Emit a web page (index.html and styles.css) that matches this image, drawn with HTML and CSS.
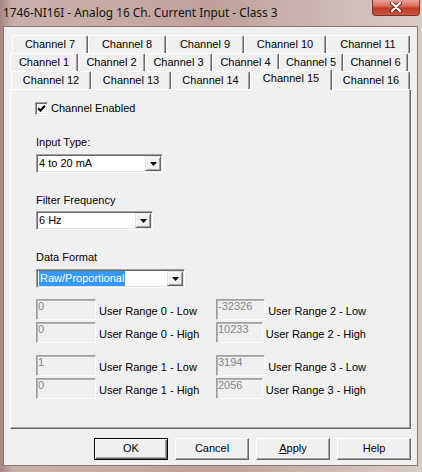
FILE: index.html
```html
<!DOCTYPE html>
<html>
<head>
<meta charset="utf-8">
<title>1746-NI16I</title>
<link rel="stylesheet" href="styles.css">
</head>
<body>
<div class="window">
  <div class="titlebar">
    <span class="title">1746-NI16I - Analog 16 Ch. Current Input - Class 3</span>
    <div class="close">
      <svg width="12" height="10" viewBox="0 0 12 10">
        <path d="M2 1 L10 9 M10 1 L2 9" stroke="#6a2a20" stroke-width="4" stroke-linecap="round"/>
        <path d="M2 1 L10 9 M10 1 L2 9" stroke="#ffffff" stroke-width="2.2" stroke-linecap="round"/>
      </svg>
    </div>
  </div>
  <div class="client">
    <div class="tabs">
      <div class="tabrow r1">
        <div class="tab w76">Channel 7</div>
        <div class="tab w78">Channel 8</div>
        <div class="tab w78">Channel 9</div>
        <div class="tab w82">Channel 10</div>
        <div class="tab w84">Channel 11</div>
      </div>
      <div class="tabrow r2">
        <div class="tab w68">Channel 1</div>
        <div class="tab w67">Channel 2</div>
        <div class="tab w67">Channel 3</div>
        <div class="tab w67">Channel 4</div>
        <div class="tab w64">Channel 5</div>
        <div class="tab w65">Channel 6</div>
      </div>
      <div class="tabrow r3">
        <div class="tab w80">Channel 12</div>
        <div class="tab w80">Channel 13</div>
        <div class="tab w79">Channel 14</div>
        <div class="tab w82 sel">Channel 15</div>
        <div class="tab w78">Channel 16</div>
      </div>
    </div>
    <div class="panel">
      <div class="checkrow">
        <span class="checkbox">
          <svg width="9" height="9" viewBox="0 0 9 9">
            <polyline points="1.2,4.2 3.4,6.6 7.8,1.8" fill="none" stroke="#000" stroke-width="2.1"/>
          </svg>
        </span>
        <span>Channel Enabled</span>
      </div>

      <div class="label l1">Input Type:</div>
      <div class="combo c1 mt5">
        <span class="val">4 to 20 mA</span>
        <span class="dropbtn"><svg width="7" height="4" viewBox="0 0 7 4"><polygon points="0,0 7,0 3.5,4" fill="#000"/></svg></span>
      </div>

      <div class="label l1">Filter Frequency</div>
      <div class="combo c2 mt4">
        <span class="val">6 Hz</span>
        <span class="dropbtn"><svg width="7" height="4" viewBox="0 0 7 4"><polygon points="0,0 7,0 3.5,4" fill="#000"/></svg></span>
      </div>

      <div class="label l1">Data Format</div>
      <div class="combo c3 mt5">
        <span class="val"><span class="hl">Raw/Proportional</span></span>
        <span class="dropbtn"><svg width="7" height="4" viewBox="0 0 7 4"><polygon points="0,0 7,0 3.5,4" fill="#000"/></svg></span>
      </div>

      <div class="ranges first">
        <div class="range"><span class="edit">0</span><span class="rlabel">User Range 0 - Low</span></div>
        <div class="range"><span class="edit">-32326</span><span class="rlabel">User Range 2 - Low</span></div>
        <div class="range"><span class="edit">0</span><span class="rlabel">User Range 0 - High</span></div>
        <div class="range"><span class="edit">10233</span><span class="rlabel">User Range 2 - High</span></div>
      </div>
      <div class="ranges second">
        <div class="range"><span class="edit">1</span><span class="rlabel">User Range 1 - Low</span></div>
        <div class="range"><span class="edit">3194</span><span class="rlabel">User Range 3 - Low</span></div>
        <div class="range"><span class="edit">0</span><span class="rlabel">User Range 1 - High</span></div>
        <div class="range"><span class="edit">2056</span><span class="rlabel">User Range 3 - High</span></div>
      </div>
    </div>
    <div class="buttons">
      <div class="button default">OK</div>
      <div class="button">Cancel</div>
      <div class="button"><u>A</u>pply</div>
      <div class="button">Help</div>
    </div>
  </div>
</div>
</body>
</html>
```
FILE: styles.css
```css
* { box-sizing: border-box; }
html, body { margin: 0; padding: 0; }
body {
  width: 422px;
  height: 472px;
  overflow: hidden;
  font-family: "Liberation Sans", Arial, sans-serif;
  font-size: 11px;
  color: #000;
  background: #b1958f;
}
.window {
  width: 422px;
  height: 472px;
  display: flex;
  flex-direction: column;
  background: linear-gradient(90deg, #a3867f 0, #c9afaa 3%, #c7aaa4 30%, #bf9f99 50%, #cdb6b1 75%, #d9cbc8 100%);
}
.titlebar {
  height: 26px;
  flex: none;
  display: flex;
  align-items: flex-start;
}
.title {
  margin: 4px 0 0 3px;
  font-family: "Noto Sans", sans-serif;
  font-size: 11.8px;
  line-height: 16px;
  color: #111;
}
.close {
  margin-left: auto;
  margin-right: 2px;
  width: 48px;
  height: 16px;
  border: 1px solid #7a3328;
  border-top: none;
  border-radius: 0 0 4px 4px;
  background: linear-gradient(#e7a597 0, #d86f5c 40%, #c03a26 55%, #c9563f 100%);
  display: flex;
  justify-content: center;
  align-items: flex-start;
  padding-top: 2px;
}
.client {
  margin: 0 4px 0 3px;
  height: 440px;
  flex: none;
  border: 1px solid #8a7572;
  background: #f0f0f0;
  padding: 8px 6px 0 6px;
  display: flex;
  flex-direction: column;
}
.tabrow {
  display: flex;
  height: 18px;
}
.r1 { margin-left: 2px; }
.r3 { margin-left: 1px; }
.tab {
  flex: none;
  height: 18px;
  border-top: 1px solid #fff;
  border-left: 1px solid #fff;
  border-right: 1px solid #696969;
  box-shadow: inset -1px 0 #a0a0a0;
  border-radius: 2px 2px 0 0;
  text-align: center;
  line-height: 16px;
  white-space: nowrap;
  background: #f0f0f0;
}
.tab.sel {
  height: 21px;
  margin-top: -2px;
  position: relative;
  z-index: 1;
  border-bottom: none;
}
.w64 { width: 64px; }
.w65 { width: 65px; }
.w67 { width: 67px; }
.w68 { width: 68px; }
.w76 { width: 76px; }
.w78 { width: 78px; }
.w79 { width: 79px; }
.w80 { width: 80px; }
.w82 { width: 82px; }
.w84 { width: 84px; }

.panel {
  height: 340px;
  flex: none;
  border: 1px solid;
  border-color: #fff #696969 #696969 #fff;
  box-shadow: inset -1px -1px #a0a0a0;
  padding: 12px 0 0 25px;
  display: flex;
  flex-direction: column;
  align-items: flex-start;
}
.checkrow {
  display: flex;
  align-items: center;
  height: 13px;
  line-height: 13px;
  margin-left: -1px;
}
.checkbox {
  width: 13px;
  height: 13px;
  margin-right: 3px;
  background: #fff;
  border: 1px solid;
  border-color: #a0a0a0 #fff #fff #a0a0a0;
  box-shadow: inset 1px 1px #696969, inset -1px -1px #e3e3e3;
  display: flex;
  align-items: center;
  justify-content: center;
}
.label {
  line-height: 13px;
  height: 13px;
}
.l1 { margin-top: 21px; }
.mt4 { margin-top: 4px; }
.mt5 { margin-top: 5px; }
.combo {
  display: flex;
  height: 19px;
  background: #fff;
  border: 1px solid;
  border-color: #a0a0a0 #fff #fff #a0a0a0;
  box-shadow: inset 1px 1px #696969, inset -1px -1px #e3e3e3;
  padding: 1px;
}
.c1 { width: 127px; }
.c2 { width: 117px; }
.c3 { width: 149px; }
.combo .val {
  flex: 1;
  line-height: 15px;
  padding-left: 1px;
  white-space: nowrap;
}
.hl {
  background: #3399ff;
  color: #fff;
  padding: 0 1px;
  display: inline-block;
  line-height: 15px;
}
.dropbtn {
  width: 16px;
  height: 15px;
  background: #f0f0f0;
  border: 1px solid;
  border-color: #e3e3e3 #696969 #696969 #e3e3e3;
  box-shadow: inset 1px 1px #fff, inset -1px -1px #a0a0a0;
  display: flex;
  align-items: center;
  justify-content: center;
}
.ranges {
  display: grid;
  grid-template-columns: 180px 150px;
  row-gap: 2px;
}
.ranges.first { margin-top: 11px; }
.ranges.second { margin-top: 12px; }
.range {
  display: flex;
  align-items: flex-start;
}
.edit {
  width: 60px;
  height: 21px;
  background: #f0f0f0;
  border: 1px solid;
  border-color: #a0a0a0 #fcfcfc #fcfcfc #a0a0a0;
  box-shadow: inset 1px 1px #b4b4b4;
  color: #858585;
  padding-left: 1px;
  line-height: 13px;
}
.rlabel {
  margin-left: 3px;
  padding-top: 6px;
  line-height: 13px;
  white-space: nowrap;
}
.buttons {
  display: flex;
  justify-content: flex-end;
  gap: 7px;
  margin-top: 9px;
}
.button {
  width: 74px;
  height: 22px;
  background: #f0f0f0;
  border: 1px solid;
  border-color: #fff #696969 #696969 #fff;
  box-shadow: inset -1px -1px #a0a0a0;
  text-align: center;
  line-height: 19px;
}
.button.default {
  border: 1px solid #000;
  box-shadow: inset 1px 1px #fff, inset -1px -1px #696969, inset -2px -2px #a0a0a0;
}
```
